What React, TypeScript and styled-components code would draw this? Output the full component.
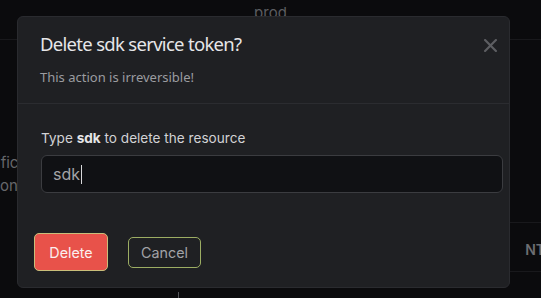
import React from 'react'
import styled, { createGlobalStyle } from 'styled-components'

const GlobalStyle = createGlobalStyle`
  html, body {
    margin: 0;
    padding: 0;
    background: #0b0b0d;
    width: 541px;
    height: 298px;
    overflow: hidden;
  }
  * { box-sizing: border-box; }
`

const Page = styled.div`
  position: relative;
  width: 541px;
  height: 298px;
  background: #0b0b0d;
  font-family: Inter, 'Liberation Sans', sans-serif;
  overflow: hidden;
`

const TopRow = styled.div`
  height: 40px;
  border-bottom: 1px solid #19191c;
  display: flex;
  justify-content: center;
  padding: 3px 0 0 0;
  color: #5c5d61;
  font-size: 15px;
`

const SideText = styled.div`
  padding: 111px 0 0 0;
  display: flex;
  flex-direction: column;
`

const SideLine = styled.span<{ shift: number }>`
  color: #66676b;
  font-size: 15px;
  line-height: 23px;
  margin-left: ${({ shift }) => shift}px;
`

const RightRow = styled.div<{ top: number }>`
  position: absolute;
  right: 0;
  top: ${({ top }) => top}px;
  width: 40px;
  height: 50px;
  border-top: 1px solid #19191c;
  border-bottom: 1px solid #19191c;
  display: flex;
  align-items: center;
  justify-content: flex-end;
  padding-top: 5px;
  color: #6d6e72;
  font-size: 14px;
  font-weight: 600;
  margin-right: -4px;
`

const Tick = styled.div`
  position: absolute;
  left: 178px;
  bottom: 0;
  width: 1px;
  height: 6px;
  background: #55565a;
`

const Modal = styled.div`
  position: absolute;
  left: 17px;
  top: 16px;
  width: 493px;
  height: 272px;
  background: #1f2023;
  border: 1px solid #2a2b2f;
  border-radius: 6px;
  display: flex;
  flex-direction: column;
`

const Header = styled.div`
  position: relative;
  padding: 13px 22px 16px 22px;
  border-bottom: 1px solid #2b2c30;
`

const Title = styled.h2`
  margin: 0;
  font-family: 'Noto Sans', 'Open Sans', sans-serif;
  font-weight: 400;
  font-size: 18.5px;
  line-height: 28px;
  color: #e6e6e8;
  letter-spacing: -0.7px;
`

const Subtitle = styled.p`
  margin: 9px 0 0 0;
  font-family: 'Noto Sans', 'Open Sans', sans-serif;
  font-size: 13px;
  line-height: 20px;
  color: #9b9ca0;
`

const Close = styled.button`
  position: absolute;
  right: 11px;
  top: 20px;
  width: 16px;
  height: 16px;
  padding: 0;
  border: none;
  background: transparent;
  display: flex;
  align-items: center;
  justify-content: center;
`

const Body = styled.div`
  padding: 23px 6px 0 23px;
  display: flex;
  flex-direction: column;
  gap: 6px;
`

const Label = styled.div`
  font-size: 13.6px;
  line-height: 22px;
  color: #d2d2d5;
  b { font-weight: 700; color: #e6e6e8; }
`

const Input = styled.div`
  height: 38px;
  border: 1px solid #3b3c40;
  border-radius: 6px;
  background: #101114;
  display: flex;
  align-items: center;
  padding: 0 11px;
  font-size: 16px;
  color: #a3a4a8;
`

const Caret = styled.span`
  display: inline-block;
  width: 1px;
  height: 19px;
  background: #d8d8da;
  margin-left: 1px;
`

const Footer = styled.div`
  margin-top: auto;
  padding: 0 0 16px 16px;
  display: flex;
  align-items: center;
  gap: 20px;
`

const Button = styled.button<{ danger?: boolean }>`
  font-family: Inter, 'Liberation Sans', sans-serif;
  font-size: 14.3px;
  border-radius: 5px;
  cursor: pointer;
  height: ${({ danger }) => (danger ? 38 : 31)}px;
  width: ${({ danger }) => (danger ? 74 : 73)}px;
  background: ${({ danger }) => (danger ? '#e8524a' : 'transparent')};
  color: ${({ danger }) => (danger ? '#fbefee' : '#a2a3a7')};
  border: 1px solid ${({ danger }) => (danger ? '#c9be7a' : '#9cad63')};
`

export default function App() {
  return (
    <Page>
      <GlobalStyle />
      <TopRow>prod</TopRow>
      <SideText>
        <SideLine shift={-3}>ific</SideLine>
        <SideLine shift={0}>on</SideLine>
      </SideText>
      <RightRow top={222}>NT</RightRow>
      <Tick />
      <Modal>
        <Header>
          <Title>Delete sdk service token?</Title>
          <Subtitle>This action is irreversible!</Subtitle>
          <Close aria-label='Close'>
            <svg width='13' height='13' viewBox='0 0 12 12'>
              <path d='M1 1 L11 11 M11 1 L1 11' stroke='#5d5e62' strokeWidth='2' strokeLinecap='round' />
            </svg>
          </Close>
        </Header>
        <Body>
          <Label>
            Type <b>sdk</b> to delete the resource
          </Label>
          <Input>
            sdk
            <Caret />
          </Input>
        </Body>
        <Footer>
          <Button danger>Delete</Button>
          <Button>Cancel</Button>
        </Footer>
      </Modal>
    </Page>
  )
}
